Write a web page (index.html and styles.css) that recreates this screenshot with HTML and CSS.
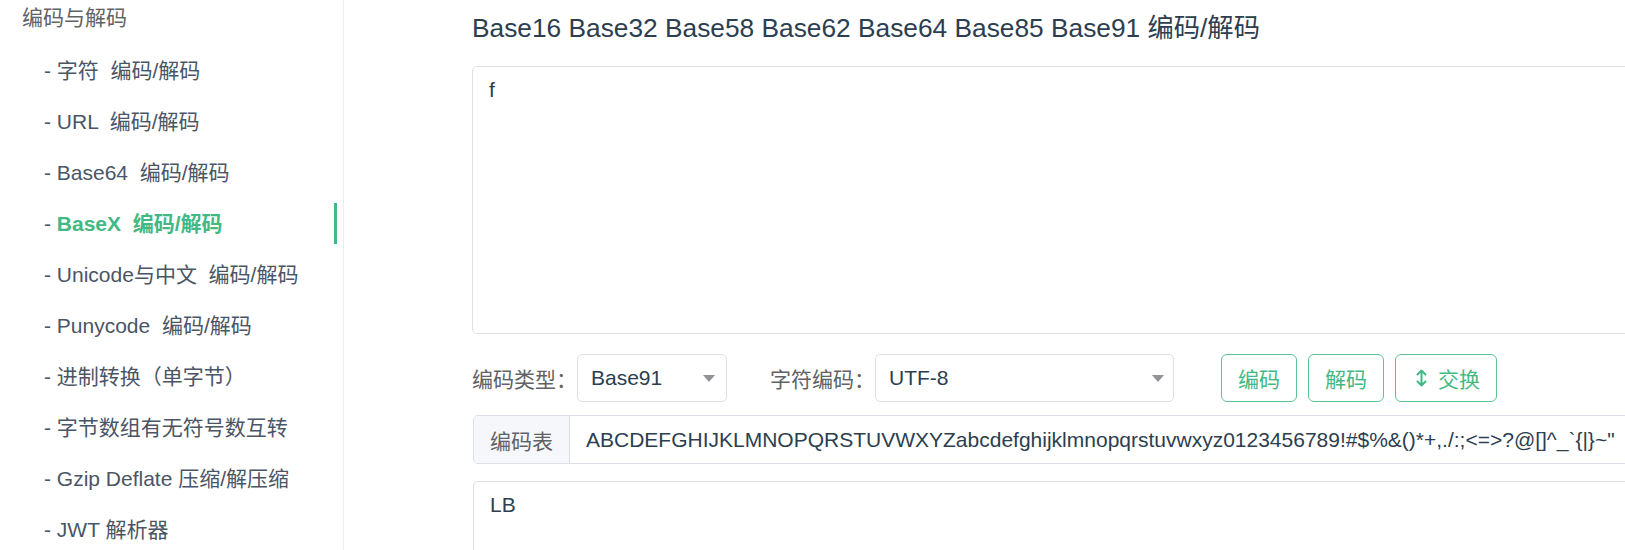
FILE: index.html
```html
<!DOCTYPE html>
<html lang="zh-CN">
<head>
<meta charset="utf-8">
<title>BaseX 编码/解码</title>
<link rel="stylesheet" href="styles.css">
</head>
<body>
<div class="layout">
  <aside class="sidebar">
    <div class="group-title">编码与解码</div>
    <ul class="nav">
      <li class="nav-item">- 字符  编码/解码</li>
      <li class="nav-item">- URL  编码/解码</li>
      <li class="nav-item">- Base64  编码/解码</li>
      <li class="nav-item active">- <span class="active-text">BaseX  编码/解码</span></li>
      <li class="nav-item">- Unicode与中文  编码/解码</li>
      <li class="nav-item">- Punycode  编码/解码</li>
      <li class="nav-item">- 进制转换（单字节）</li>
      <li class="nav-item">- 字节数组有无符号数互转</li>
      <li class="nav-item">- Gzip Deflate 压缩/解压缩</li>
      <li class="nav-item">- JWT 解析器</li>
    </ul>
  </aside>
  <main class="main">
    <h1 class="title">Base16 Base32 Base58 Base62 Base64 Base85 Base91 编码/解码</h1>
    <textarea class="textbox">f</textarea>
    <div class="controls">
      <span class="label">编码类型：</span>
      <div class="select select-type"><span>Base91</span><i class="caret"></i></div>
      <span class="label label-charset">字符编码：</span>
      <div class="select select-charset"><span>UTF-8</span><i class="caret"></i></div>
      <div class="buttons">
        <button class="btn">编码</button>
        <button class="btn">解码</button>
        <button class="btn btn-swap"><svg class="swap-icon" viewBox="0 0 18 18" width="18" height="18"><path d="M9.5 1.5 V16.5 M5.5 5.5 L9.5 1.5 L13.5 5.5 M5.5 12.5 L9.5 16.5 L13.5 12.5" fill="none" stroke="#42b983" stroke-width="2" stroke-linecap="round" stroke-linejoin="round"/></svg>交换</button>
      </div>
    </div>
    <div class="table-row">
      <div class="addon">编码表</div>
      <div class="table-value">ABCDEFGHIJKLMNOPQRSTUVWXYZabcdefghijklmnopqrstuvwxyz0123456789!#$%&amp;()*+,./:;&lt;=&gt;?@[]^_`{|}~"</div>
    </div>
    <textarea class="textbox output">LB</textarea>
  </main>
</div>
</body>
</html>
```

FILE: styles.css
```css
html, body {
  margin: 0;
  padding: 0;
  background: #ffffff;
  overflow: hidden;
  height: 550px;
}

body {
  font-family: "Liberation Sans", Arial, "Noto Sans CJK SC", sans-serif;
  font-size: 21px;
  color: #2c3e50;
}

.layout {
  display: flex;
  width: 1625px;
  height: 550px;
  overflow: hidden;
}

.sidebar {
  width: 343px;
  flex-shrink: 0;
  border-right: 1px solid #eaecef;
  box-sizing: content-box;
}

.group-title {
  padding-left: 22px;
  line-height: 36px;
  height: 36px;
  color: #606266;
}

.nav {
  list-style: none;
  margin: 0;
  padding: 9px 0 0 0;
}

.nav-item {
  position: relative;
  height: 51px;
  line-height: 51px;
  padding-left: 44px;
  white-space: pre;
  color: #4a5566;
}

.nav-item.active .active-text {
  color: #42b983;
  font-weight: bold;
}

.nav-item.active::after {
  content: "";
  position: absolute;
  right: 6px;
  top: 5px;
  bottom: 5px;
  width: 3px;
  background: #42b983;
}

.main {
  width: 1200px;
  flex-shrink: 0;
  padding: 10px 0 0 128px;
}

.title {
  margin: 0;
  font-size: 26.3px;
  font-weight: normal;
  line-height: 36px;
  height: 36px;
  color: #2c3e50;
  white-space: nowrap;
}

.textbox {
  display: block;
  box-sizing: border-box;
  width: 100%;
  height: 268px;
  margin: 20px 0 0 0;
  padding: 7px 16px;
  border: 1px solid #dcdfe6;
  border-radius: 5px;
  font: inherit;
  font-size: 21px;
  line-height: 31.5px;
  color: #2c3e50;
  resize: none;
  overflow: hidden;
  outline: none;
  background: #fff;
}

.controls {
  display: flex;
  align-items: center;
  height: 48px;
  margin-top: 20px;
}

.label {
  color: #606266;
  white-space: nowrap;
}

.label-charset {
  margin-left: 43px;
}

.select {
  box-sizing: border-box;
  height: 48px;
  display: flex;
  align-items: center;
  justify-content: space-between;
  border: 1px solid #dcdfe6;
  border-radius: 5px;
  padding: 0 11px 0 13px;
  color: #2c3e50;
}

.select-type {
  width: 150px;
}

.select-charset {
  width: 299px;
  padding-right: 9px;
}

.caret {
  width: 0;
  height: 0;
  border-left: 6px solid transparent;
  border-right: 6px solid transparent;
  border-top: 7px solid #909399;
}

.buttons {
  display: flex;
  gap: 11px;
  margin-left: 47px;
}

.btn {
  box-sizing: border-box;
  height: 48px;
  display: flex;
  align-items: center;
  padding: 0 16px;
  border: 1px solid #5cc396;
  border-radius: 6px;
  background: #fff;
  color: #42b983;
  font-family: "Liberation Sans", "Noto Sans CJK SC", sans-serif;
  font-size: 21px;
  cursor: pointer;
}

.swap-icon {
  margin-right: 8px;
}

.table-row {
  display: flex;
  height: 49px;
  box-sizing: border-box;
  margin-top: 13px;
  margin-left: 1px;
  border: 1px solid #dcdfe6;
  border-radius: 5px;
  overflow: hidden;
}

.addon {
  display: flex;
  align-items: center;
  padding: 0 16px;
  background: #f5f7fa;
  border-right: 1px solid #dcdfe6;
  color: #606266;
  white-space: nowrap;
}

.table-value {
  display: flex;
  align-items: center;
  padding-left: 16px;
  white-space: nowrap;
  color: #2c3e50;
}

.textbox.output {
  margin-top: 17px;
  margin-left: 1px;
  height: 69px;
  border-bottom-width: 0;
  border-bottom-left-radius: 0;
  border-bottom-right-radius: 0;
}
```
